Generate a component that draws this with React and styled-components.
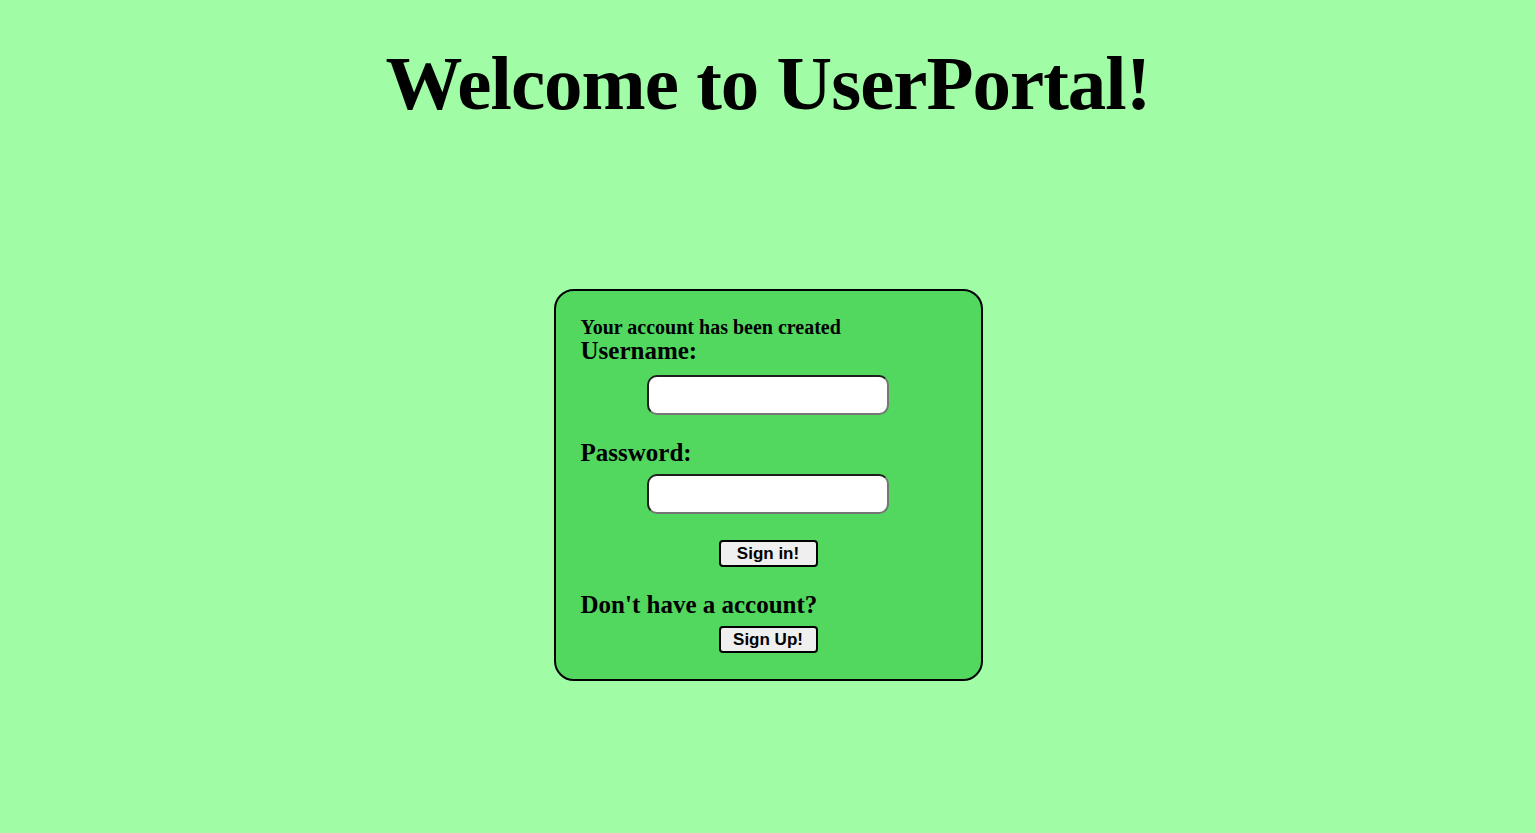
import React from "react";
import styled, { createGlobalStyle } from "styled-components";

const Global = createGlobalStyle`
  html, body {
    margin: 0;
    padding: 0;
    background: #a0fca5;
    font-family: "Liberation Serif", "Times New Roman", serif;
  }
`;

const Page = styled.div`
  display: flex;
  flex-direction: column;
  align-items: center;
  min-height: 833px;
`;

const Title = styled.h1`
  margin: 39px 0 0;
  font-size: 77px;
  letter-spacing: -1px;
  font-weight: bold;
  line-height: normal;
  color: #000;
`;

const Card = styled.div`
  margin-top: 161px;
  width: 429px;
  box-sizing: border-box;
  background: #52d85e;
  border: 2px solid #000;
  border-radius: 20px;
  padding: 26px 25px 26px;
  display: flex;
  flex-direction: column;
`;

const Notice = styled.div`
  font-size: 20px;
  line-height: 20px;
  font-weight: bold;
`;

const Label = styled.label`
  font-size: 25px;
  line-height: 25px;
  font-weight: bold;
  margin-top: ${(p) => p.$top || 0}px;
`;

const Input = styled.input`
  align-self: center;
  width: 242px;
  height: 40px;
  box-sizing: border-box;
  margin-top: ${(p) => p.$top || 0}px;
  border: 2px solid;
  border-color: #1e1e1e #767676 #767676 #1e1e1e;
  border-radius: 10px;
  background: #fff;
  outline: none;
`;

const Button = styled.button`
  align-self: center;
  width: 99px;
  height: 27px;
  box-sizing: border-box;
  margin-top: ${(p) => p.$top || 0}px;
  background: #efefef;
  border: 2px solid #000;
  border-radius: 4px;
  font-family: "Liberation Sans", Arial, sans-serif;
  font-weight: bold;
  font-size: 17px;
  color: #000;
  padding: 0;
  cursor: pointer;
`;

export default function App() {
  return (
    <>
      <Global />
      <Page>
        <Title>Welcome to UserPortal!</Title>
        <Card>
          <Notice>Your account has been created</Notice>
          <Label $top={1}>Username:</Label>
          <Input type="text" $top={12} />
          <Label $top={25}>Password:</Label>
          <Input type="password" $top={9} />
          <Button $top={26}>Sign in!</Button>
          <Label $top={25}>Don't have a account?</Label>
          <Button $top={9}>Sign Up!</Button>
        </Card>
      </Page>
    </>
  );
}
